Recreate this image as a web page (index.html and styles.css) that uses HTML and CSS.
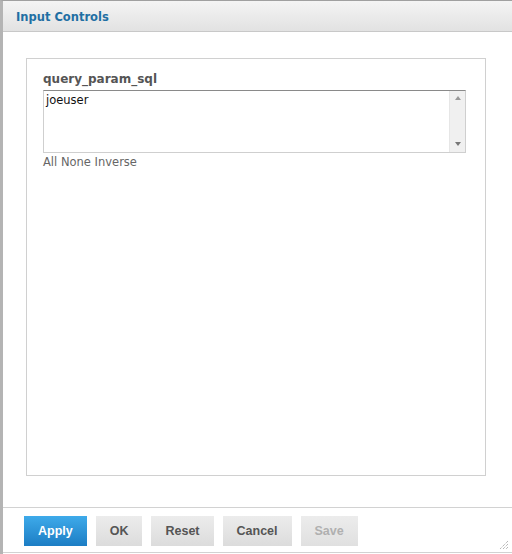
FILE: index.html
```html
<!DOCTYPE html>
<html lang="en">
<head>
    <meta charset="UTF-8">
    <title>Input Controls</title>
    <link rel="stylesheet" href="styles.css">
</head>
<body>
    <div class="dialog">
        <div class="header">Input Controls</div>
        <div class="content">
            <div class="panel">
                <div class="label">query_param_sql</div>
                <div class="textbox">
                    <div class="text">joeuser</div>
                    <div class="scroll">
                        <span class="arrow up"></span>
                        <span class="arrow down"></span>
                    </div>
                </div>
                <div class="links">All None Inverse</div>
            </div>
        </div>
        <div class="footer">
            <button class="btn primary">Apply</button>
            <button class="btn">OK</button>
            <button class="btn">Reset</button>
            <button class="btn">Cancel</button>
            <button class="btn disabled">Save</button>
            <svg class="grip" width="10" height="10" viewBox="0 0 10 10">
                <path d="M9 1 L1 9 M9 4 L4 9 M9 7 L7 9" stroke="#999" stroke-width="1" stroke-dasharray="1 1"/>
            </svg>
        </div>
    </div>
</body>
</html>
```

FILE: styles.css
```css
* { box-sizing: border-box; }
body { margin: 0; background: #fff; font-family: "DejaVu Sans", Verdana, sans-serif; font-size: 11.5px; }
.dialog { width: 512px; height: 554px; border-left: 3px solid #b4b4b4; border-top: 1px solid #a0a0a0; display: flex; flex-direction: column; position: relative; }
.header { height: 31px; line-height: 27px; padding: 3px 0 0 13px; font-weight: bold; color: #1f6fa3; background: linear-gradient(#f4f4f4, #e2e2e2); border-bottom: 1px solid #c8c8c8; }
.content { flex: 1; padding: 26px 26px 0 23px; }
.panel { height: 418px; border: 1px solid #d0d0d0; padding: 13px 19px 0 16px; }
.label { font-weight: bold; font-size: 12px; color: #555; margin-bottom: 4px; }
.textbox { height: 63px; border: 1px solid #cfcfcf; border-top-color: #8a8a8a; display: flex; }
.text { flex: 1; padding: 2px 2px; color: #111; }
.scroll { width: 16px; background: #f0f0f0; border-left: 1px solid #e6e6e6; position: relative; }
.arrow { position: absolute; left: 5px; width: 0; height: 0; border-left: 3px solid transparent; border-right: 3px solid transparent; }
.arrow.up { top: 5px; border-bottom: 4px solid #999; }
.arrow.down { bottom: 6px; border-top: 4px solid #777; }
.links { color: #666; margin-top: 2px; }
.footer { height: 46px; border-top: 1px solid #d2d2d2; border-bottom: 1px solid #d2d2d2; padding: 8px 0 0 21px; display: flex; align-items: flex-start; gap: 9px; margin-bottom: 1px; }
.btn { height: 30px; padding: 0 14px; border: none; font-family: "Liberation Sans", Arial, sans-serif; font-size: 12.5px; font-weight: bold; color: #555; background: linear-gradient(#ececec, #dcdcdc); }
.btn.primary { color: #fff; background: linear-gradient(#3eaaea, #1c7dc4); }
.btn.disabled { color: #b0b0b0; background: linear-gradient(#ececec, #e0e0e0); }
.grip { position: absolute; right: 3px; bottom: 4px; }
```
